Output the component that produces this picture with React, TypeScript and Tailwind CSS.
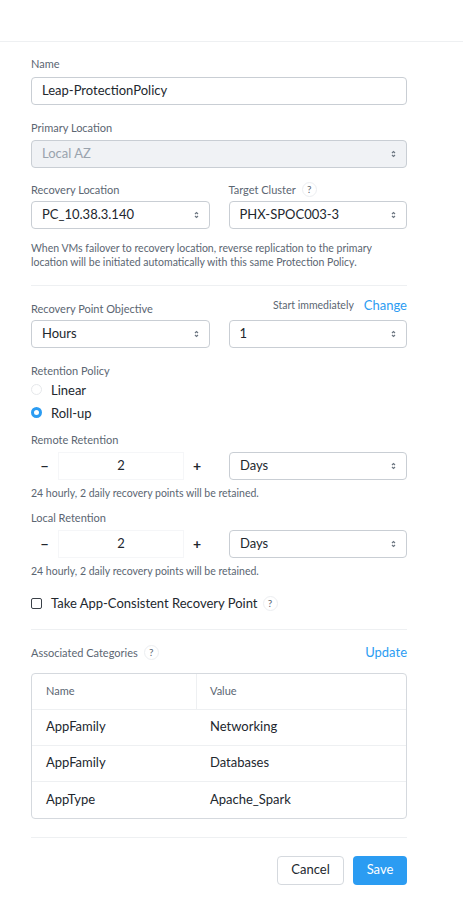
import type { ReactNode } from 'react'

const font = { fontFamily: 'Lato, "Open Sans", sans-serif' }

const Label = ({ children }: { children: ReactNode }) => (
  <div className="text-[11px] leading-[14px] text-[#5b6672]">{children}</div>
)

const Help = ({ className = 'ml-1.5' }: { className?: string }) => (
  <span
    className={`${className} inline-flex h-[15px] w-[15px] items-center justify-center rounded-full border border-[#eceef1] text-[10px] text-[#5b6672]`}
  >
    ?
  </span>
)

const Arrows = () => (
  <svg width="5" height="8" viewBox="0 0 5 8" className="shrink-0">
    <path d="M1 3 2.5 1.5 4 3" fill="none" stroke="#6b7580" strokeWidth="1.2" />
    <path d="M1 5 2.5 6.5 4 5" fill="none" stroke="#6b7580" strokeWidth="1.2" />
  </svg>
)

const Select = ({ value, disabled }: { value: string; disabled?: boolean }) => (
  <div
    className={`flex h-[28px] flex-1 items-center justify-between rounded-[4px] border border-[#c9ced4] pl-[10px] pr-[10px] text-[13px] ${
      disabled ? 'bg-[#f0f2f5] text-[#9aa3ad]' : 'bg-white text-[#22272e]'
    }`}
  >
    <span>{value}</span>
    <Arrows />
  </div>
)

const Stepper = ({ value }: { value: string }) => (
  <div className="flex h-[28px] flex-1 items-center">
    <span className="flex w-[27px] items-center justify-center text-[14px] font-bold text-[#22272e]">−</span>
    <div className="flex h-full w-[126px] items-center justify-center border border-[#f5f6f8] text-[13px] text-[#22272e]">
      {value}
    </div>
    <span className="flex w-[26px] items-center justify-center text-[14px] font-bold text-[#22272e]">+</span>
  </div>
)

const Radio = ({ label, checked }: { label: string; checked?: boolean }) => (
  <div className="flex items-center gap-[9px] text-[13px] leading-[16px] text-[#22272e]">
    {checked ? (
      <span className="h-[11px] w-[11px] rounded-full border-[3px] border-[#2b9cf2] bg-white" />
    ) : (
      <span className="h-[11px] w-[11px] rounded-full border border-[#e6e8eb] bg-white" />
    )}
    {label}
  </div>
)

const rows = [
  ['AppFamily', 'Networking'],
  ['AppFamily', 'Databases'],
  ['AppType', 'Apache_Spark'],
]

export default function App() {
  return (
    <div className="min-h-[914px] w-[463px] bg-white" style={font}>
      <div className="h-[42px] border-b border-[#eef0f2]" />
      <div className="flex flex-col px-[31px] pr-[56px]">
        <div className="mt-[15px]">
          <Label>Name</Label>
          <div className="mt-[6px] flex h-[28px] items-center rounded-[4px] border border-[#c9ced4] px-[10px] text-[13px] text-[#22272e]">
            Leap-ProtectionPolicy
          </div>
        </div>

        <div className="mt-[16px]">
          <Label>Primary Location</Label>
          <div className="mt-[5px] flex">
            <Select value="Local AZ" disabled />
          </div>
        </div>

        <div className="mt-[14px] flex gap-[19px]">
          <div className="flex flex-1 flex-col">
            <div className="flex h-[15px] items-center">
              <Label>Recovery Location</Label>
            </div>
            <div className="mt-[4px] flex">
              <Select value="PC_10.38.3.140" />
            </div>
          </div>
          <div className="flex flex-1 flex-col">
            <div className="flex h-[15px] items-center">
              <Label>Target Cluster</Label>
              <Help />
            </div>
            <div className="mt-[4px] flex">
              <Select value="PHX-SPOC003-3" />
            </div>
          </div>
        </div>

        <p className="mt-[12px] text-[10.5px] leading-[14px] text-[#5b6672]">
          When VMs failover to recovery location, reverse replication to the primary location will be initiated
          automatically with this same Protection Policy.
        </p>

        <div className="mt-[16px] border-t border-[#eef0f2]" />

        <div className="mt-[10px] flex items-end justify-between">
          <Label>Recovery Point Objective</Label>
          <div className="flex items-center gap-[10px]">
            <span className="text-[10.5px] text-[#5b6672]">Start immediately</span>
            <span className="text-[13px] text-[#2b9cf2]">Change</span>
          </div>
        </div>
        <div className="mt-[4px] flex gap-[19px]">
          <Select value="Hours" />
          <Select value="1" />
        </div>

        <div className="mt-[16px]">
          <Label>Retention Policy</Label>
        </div>
        <div className="mt-[4px] flex flex-col gap-[7px]">
          <Radio label="Linear" />
          <Radio label="Roll-up" checked />
        </div>

        <div className="mt-[12px]">
          <Label>Remote Retention</Label>
        </div>
        <div className="mt-[5px] flex gap-[19px]">
          <Stepper value="2" />
          <Select value="Days" />
        </div>
        <p className="mt-[6px] text-[10.5px] leading-[14px] text-[#5b6672]">
          24 hourly, 2 daily recovery points will be retained.
        </p>

        <div className="mt-[11px]">
          <Label>Local Retention</Label>
        </div>
        <div className="mt-[5px] flex gap-[19px]">
          <Stepper value="2" />
          <Select value="Days" />
        </div>
        <p className="mt-[6px] text-[10.5px] leading-[14px] text-[#5b6672]">
          24 hourly, 2 daily recovery points will be retained.
        </p>

        <div className="mt-[16px] flex items-center text-[13px] text-[#22272e]">
          <span className="mr-[9px] h-[11px] w-[11px] rounded-[2px] border border-[#3a4048] bg-white" />
          <span>Take App-Consistent Recovery Point</span>
          <Help className="ml-[5px]" />
        </div>

        <div className="mt-[16px] border-t border-[#eef0f2]" />

        <div className="mt-[13px] flex items-center justify-between">
          <div className="flex items-center">
            <Label>Associated Categories</Label>
            <Help />
          </div>
          <span className="text-[13px] text-[#2b9cf2]">Update</span>
        </div>

        <div className="mt-[10px] overflow-hidden rounded-[4px] border border-[#d5d9de]">
          <div className="flex h-[36px] border-b border-[#eef0f2] text-[11px] text-[#5b6672]">
            <div className="flex w-[165px] items-center border-r border-[#eef0f2] pl-[14px]">Name</div>
            <div className="flex flex-1 items-center pl-[13px]">Value</div>
          </div>
          {rows.map(([n, v], i) => (
            <div
              key={i}
              className={`flex h-[36px] text-[13px] text-[#22272e] ${i < rows.length - 1 ? 'border-b border-[#eef0f2]' : ''}`}
            >
              <div className="flex w-[165px] items-center pl-[14px]">{n}</div>
              <div className="flex flex-1 items-center pl-[13px]">{v}</div>
            </div>
          ))}
        </div>

        <div className="mt-[18px] border-t border-[#eef0f2]" />

        <div className="mt-[18px] flex justify-end gap-[9px]">
          <button className="h-[29px] w-[67px] rounded-[4px] border border-[#d5d9de] bg-white text-[13px] text-[#22272e]">
            Cancel
          </button>
          <button className="h-[29px] w-[54px] rounded-[4px] bg-[#2b9cf2] text-[13px] text-white">Save</button>
        </div>
      </div>
    </div>
  )
}
